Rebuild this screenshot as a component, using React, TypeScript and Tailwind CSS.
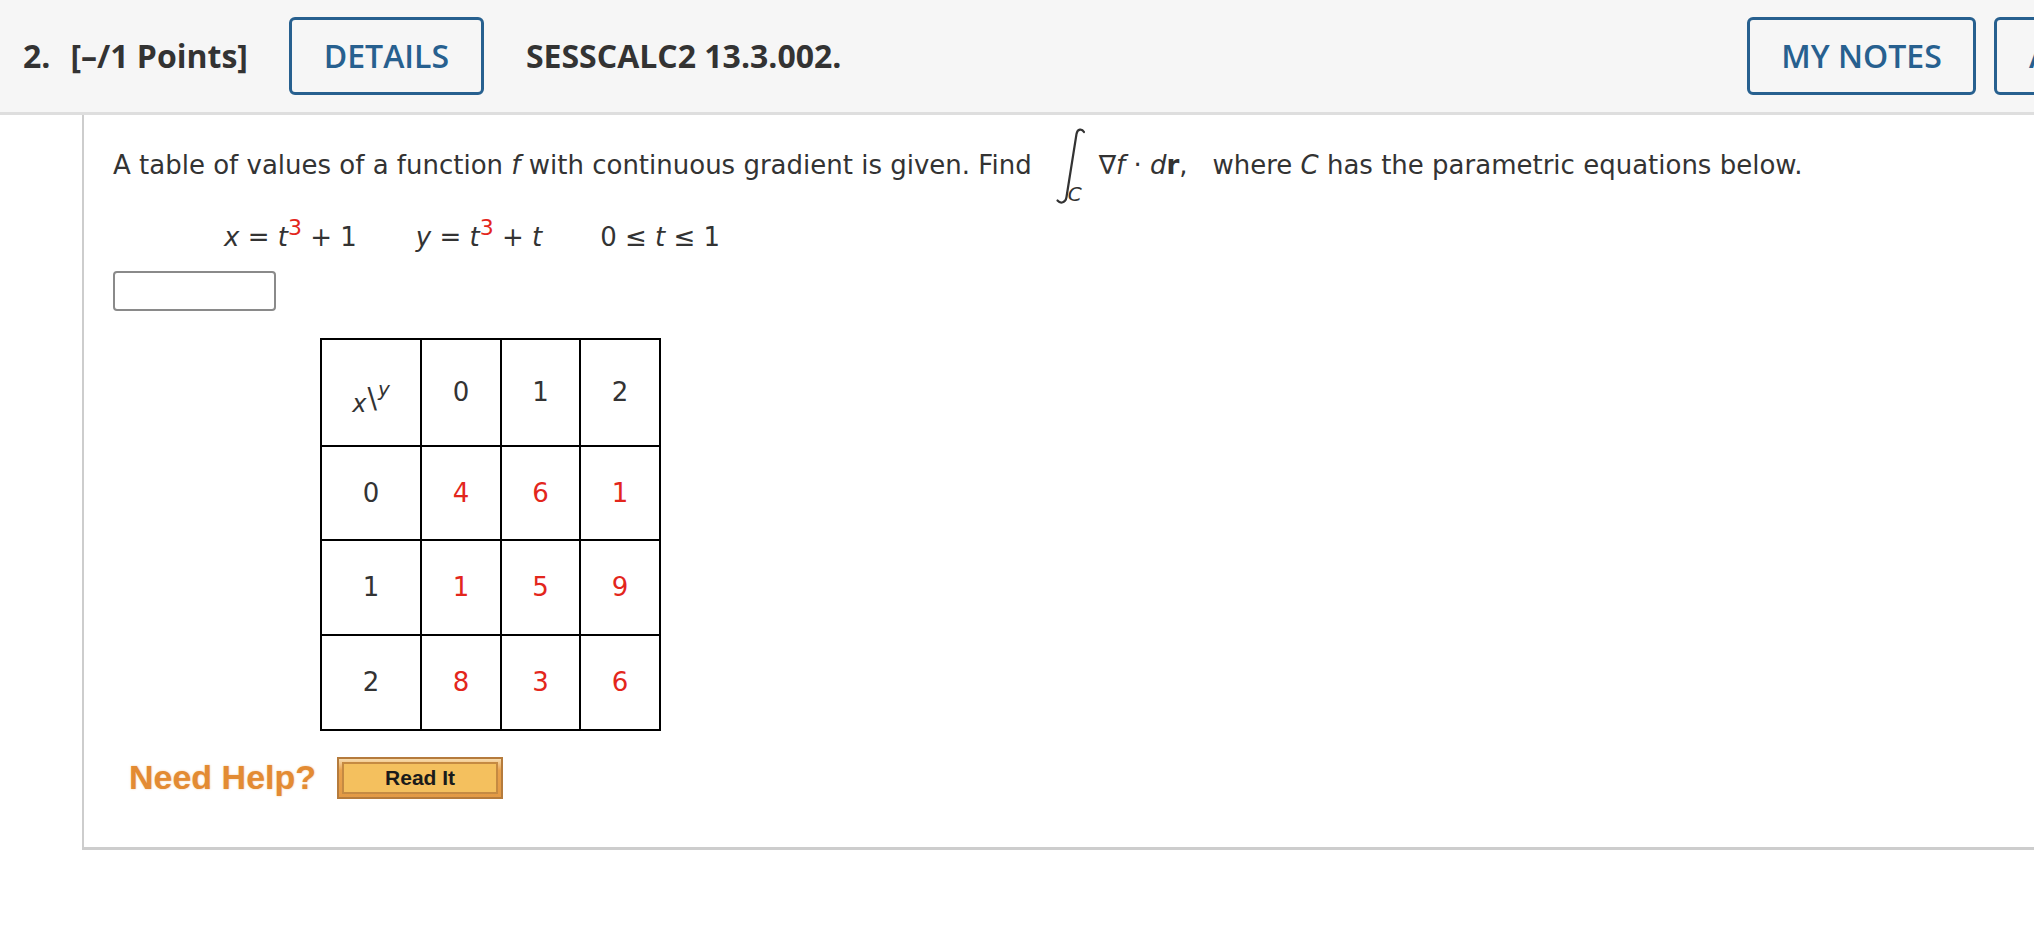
import React from "react";

const red = "text-[#e3261c]";

function Integral() {
  return (
    <span className="relative inline-block w-[38px] h-[78px] align-middle ml-[20px] mr-[9px]">
      <svg width="38" height="78" viewBox="0 0 38 78" className="absolute left-0 top-0">
        <path
          d="M32 5 C30 1.5 25.5 1.5 24.5 7 L14.5 70 C13.5 76 8.5 77 5.5 73.5"
          fill="none"
          stroke="#333"
          strokeWidth="2.2"
          strokeLinecap="round"
        />
      </svg>
      <span className="absolute left-[16px] top-[57px] text-[20px] italic leading-none text-[#333]">C</span>
    </span>
  );
}

function Cell({ children, className = "" }: { children: React.ReactNode; className?: string }) {
  return (
    <td className={"border-2 border-black text-center align-middle text-[26px] " + className}>{children}</td>
  );
}

export default function App() {
  const rows: [string, string[]][] = [
    ["0", ["4", "6", "1"]],
    ["1", ["1", "5", "9"]],
    ["2", ["8", "3", "6"]],
  ];
  return (
    <div className="w-[2034px] h-[932px] bg-white overflow-hidden">
      <div className="h-[115px] bg-[#f6f6f6] border-b-[3px] border-[#dedede] flex items-center pl-[23px] [font-family:'Open_Sans',sans-serif] text-[32px] text-[#333] overflow-hidden">
        <span className="font-bold shrink-0">2.</span>
        <span className="font-bold ml-[20px] shrink-0">[–/1 Points]</span>
        <div className="ml-[41px] shrink-0 w-[195px] h-[78px] border-[3px] border-[#27608f] rounded-[6px] flex items-center justify-center text-[#27608f] font-semibold">
          DETAILS
        </div>
        <span className="font-bold ml-[42px] shrink-0">SESSCALC2 13.3.002.</span>
        <div className="flex-1" />
        <div className="flex gap-[18px] mr-[-380px] shrink-0">
          <div className="w-[229px] h-[78px] border-[3px] border-[#27608f] rounded-[6px] flex items-center justify-center text-[#27608f] font-semibold">
            MY NOTES
          </div>
          <div className="w-[420px] h-[78px] border-[3px] border-[#27608f] rounded-[6px] flex items-center pl-[32px] text-[#27608f] font-semibold whitespace-nowrap">
            ASK YOUR TEACHER
          </div>
        </div>
      </div>

      <div className="ml-[82px] h-[735px] border-l-2 border-b-[3px] border-[#cdcdcd] pl-[29px] pt-[12px] [font-family:'DejaVu_Sans',sans-serif] text-[#333]">
        <p className="text-[26px] leading-[36px] whitespace-nowrap">
          A table of values of a function <i>f</i> with continuous gradient is given. Find
          <Integral />
          ∇<i>f</i> · <i>d</i>
          <b>r</b>, &nbsp;&nbsp;where <i>C</i> has the parametric equations below.
        </p>
        <div className="flex text-[26px] leading-[36px] mt-[14px] ml-[111px] whitespace-nowrap">
          <span>
            <i>x</i> = <i>t</i>
            <sup className={red + " text-[22px]"}>3</sup> + 1
          </span>
          <span className="ml-[59px]">
            <i>y</i> = <i>t</i>
            <sup className={red + " text-[22px]"}>3</sup> + <i>t</i>
          </span>
          <span className="ml-[58px]">
            0 ≤ <i>t</i> ≤ 1
          </span>
        </div>
        <div className="mt-[16px] w-[163px] h-[40px] border-2 border-[#8a8a8a] rounded-[4px] bg-white" />

        <table className="mt-[27px] ml-[207px] border-collapse text-[#333]">
          <tbody>
            <tr className="h-[107px]">
              <Cell className="w-[100px]">
                <span className="inline-block text-[24px] translate-y-[6px]">
                  <i className="relative top-[4px]">x</i>
                  <span className="text-[28px] mx-[1px]">\</span>
                  <i className="relative top-[-12px] text-[20px]">y</i>
                </span>
              </Cell>
              <Cell className="w-[80px]">0</Cell>
              <Cell className="w-[79px]">1</Cell>
              <Cell className="w-[80px]">2</Cell>
            </tr>
            {rows.map(([h, vals], i) => (
              <tr key={h} className={i === 0 ? "h-[94px]" : "h-[95px]"}>
                <Cell>{h}</Cell>
                {vals.map((v, j) => (
                  <Cell key={j} className={red}>
                    {v}
                  </Cell>
                ))}
              </tr>
            ))}
          </tbody>
        </table>

        <div className="flex items-center mt-[21px] ml-[16px]">
          <span className="[font-family:'Liberation_Sans',Arial,sans-serif] font-bold text-[34px] text-[#e38b33] [text-shadow:0_0_2px_rgba(227,139,51,0.5)]">
            Need Help?
          </span>
          <div className="ml-[21px] w-[166px] h-[42px] border-2 border-[#b57b3c] bg-[linear-gradient(#f7dcae,#e9a24c_30%,#e39a45)] p-[3px]">
            <div className="w-full h-full border-2 border-[#c58a42] bg-[#f4c05e] flex items-center justify-center [font-family:'Liberation_Sans',Arial,sans-serif] font-bold text-[21px] text-[#1a1a1a] leading-none">
              Read It
            </div>
          </div>
        </div>
      </div>
    </div>
  );
}
